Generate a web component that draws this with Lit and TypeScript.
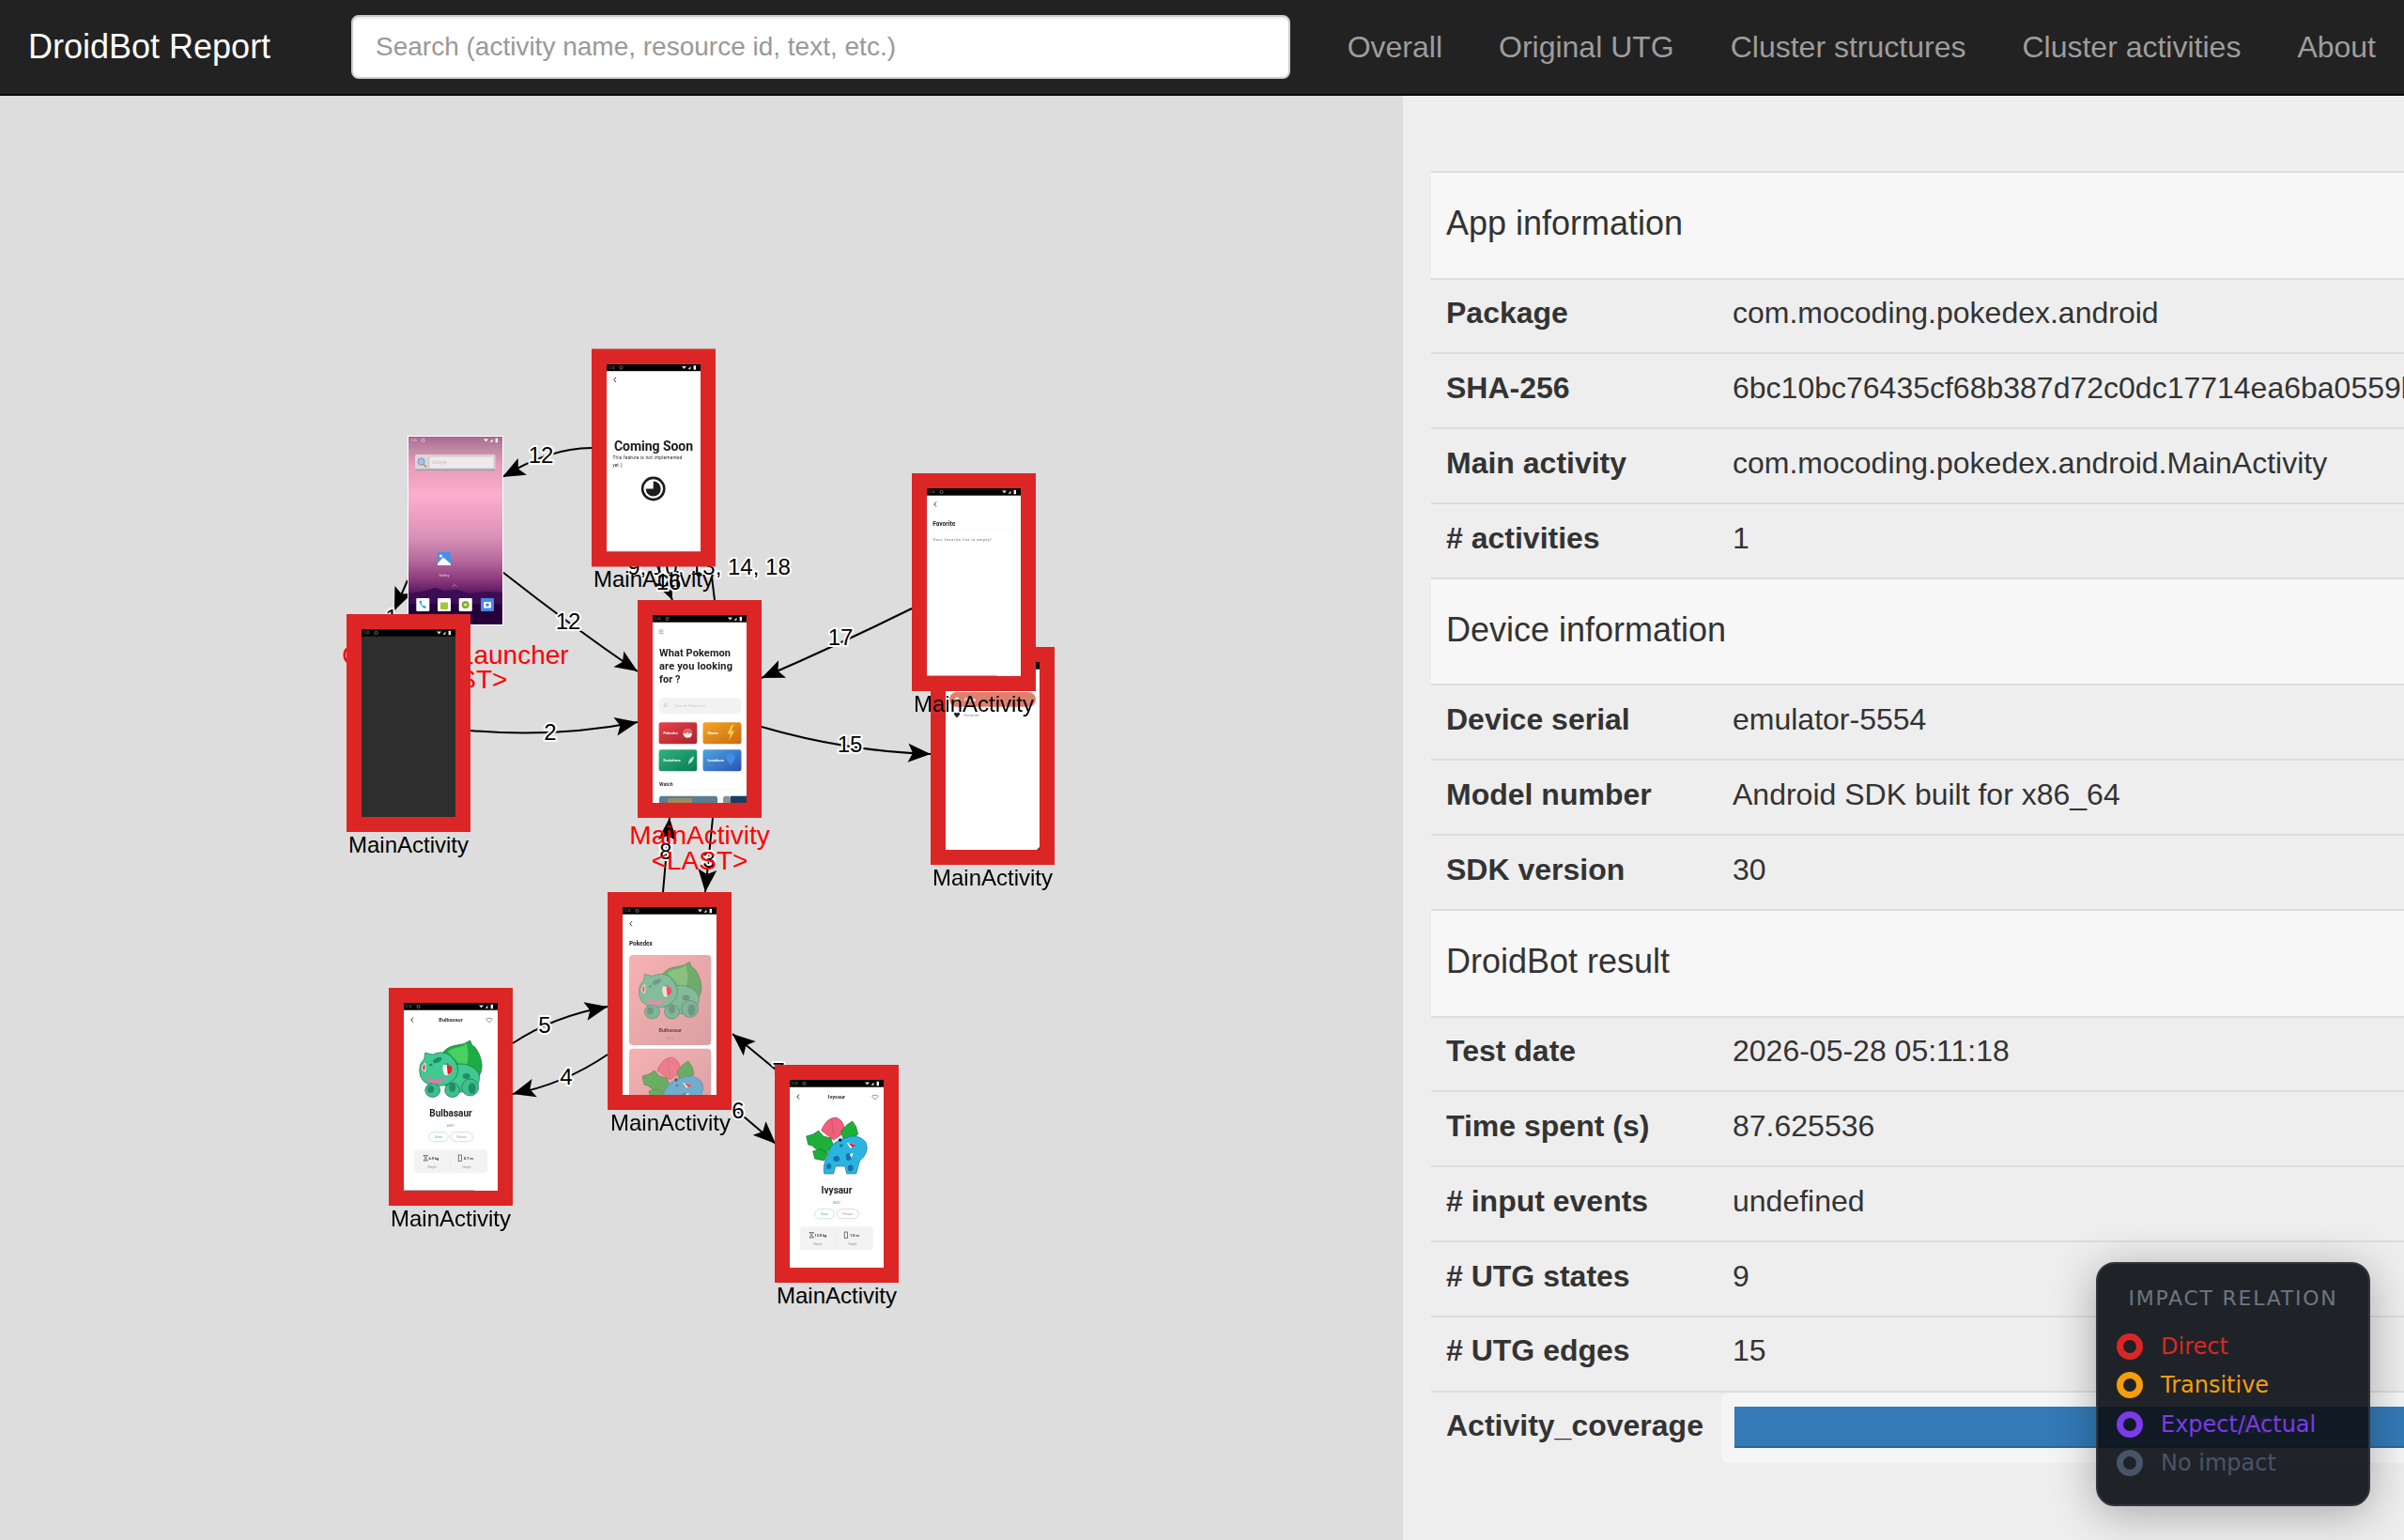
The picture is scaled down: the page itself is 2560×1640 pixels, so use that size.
import { LitElement, css, html, svg } from 'lit'
import { customElement } from 'lit/decorators.js'

const NAV_LINKS = ['Overall', 'Original UTG', 'Cluster structures', 'Cluster activities', 'About']

const SECTIONS = [
  {
    title: 'App information',
    rows: [
      ['Package', 'com.mocoding.pokedex.android'],
      ['SHA-256', '6bc10bc76435cf68b387d72c0dc17714ea6ba0559b2c41e07fd93a8e16c5d7042ab1'],
      ['Main activity', 'com.mocoding.pokedex.android.MainActivity'],
      ['# activities', '1']
    ]
  },
  {
    title: 'Device information',
    rows: [
      ['Device serial', 'emulator-5554'],
      ['Model number', 'Android SDK built for x86_64'],
      ['SDK version', '30']
    ]
  },
  {
    title: 'DroidBot result',
    rows: [
      ['Test date', '2026-05-28 05:11:18'],
      ['Time spent (s)', '87.625536'],
      ['# input events', 'undefined'],
      ['# UTG states', '9'],
      ['# UTG edges', '15']
    ]
  }
]

const LEGEND = [
  { label: 'Direct', color: '#dc2626' },
  { label: 'Transitive', color: '#f59e0b' },
  { label: 'Expect/Actual', color: '#7c3aed' },
  { label: 'No impact', color: '#475569' }
]

// path, control point (for arrow direction), arrow tip, label + label baseline
const EDGES = [
  { d: 'M630,477 Q585,477 535,508', from: [585, 482], tip: [535, 508], text: '12', lx: 576, ly: 493 },
  { d: 'M434,618 L420,650', from: [434, 618], tip: [420, 650], text: '1', lx: 417, ly: 666 },
  { d: 'M535,609 Q610,668 679,715', from: [625, 680], tip: [679, 715], text: '12', lx: 605, ly: 670 },
  { d: 'M501,778 Q590,786 679,769', from: [620, 781], tip: [679, 769], text: '2', lx: 586, ly: 788 },
  { d: 'M761,639 L757,606', text: '9, 10, 13, 14, 18', lx: 755, ly: 612 },
  { d: 'M700,603 L716,639', from: [700, 603], tip: [716, 639], text: '16', lx: 712, ly: 628 },
  { d: 'M971,648 Q890,688 811,722', from: [860, 701], tip: [811, 722], text: '17', lx: 895, ly: 687 },
  { d: 'M811,774 Q900,800 991,803', from: [930, 800], tip: [991, 803], text: '15', lx: 905, ly: 801 },
  { d: 'M706,950 L713,871', from: [709, 915], tip: [713, 871], text: '8', lx: 709, ly: 915 },
  { d: 'M759,871 L751,950', from: [755, 910], tip: [751, 950], text: '3', lx: 755, ly: 924 },
  { d: 'M546,1111 Q590,1082 647,1072', from: [600, 1082], tip: [647, 1072], text: '5', lx: 580, ly: 1100 },
  { d: 'M647,1123 Q600,1155 546,1165', from: [590, 1153], tip: [546, 1165], text: '4', lx: 603, ly: 1155 },
  { d: 'M826,1139 L780,1101', from: [800, 1118], tip: [780, 1101], text: '7', lx: 829, ly: 1149 },
  { d: 'M779,1178 L826,1218', from: [805, 1198], tip: [826, 1218], text: '6', lx: 786, ly: 1191 }
]

function arrowHead(from: number[], tip: number[]) {
  const dx = tip[0] - from[0]
  const dy = tip[1] - from[1]
  const len = Math.hypot(dx, dy)
  const ux = dx / len
  const uy = dy / len
  const at = (back: number, side: number) =>
    `${tip[0] - ux * back - uy * side},${tip[1] - uy * back + ux * side}`
  return svg`<polygon points="${at(0, 0)} ${at(24, 10)} ${at(19, 0)} ${at(24, -10)}" fill="#000"/>`
}

function statusBar() {
  return svg`
    <rect width="100" height="7.7" fill="#000"/>
    <text x="2.5" y="5.4" font-size="3.4" fill="#999">5:11</text>
    <circle cx="15.5" cy="3.9" r="1.6" fill="none" stroke="#999" stroke-width=".7"/>
    <path d="M80,2.6 h5 l-2.5,3z M86.5,5.8 l3,-3.4 v3.4z" fill="#ddd"/>
    <rect x="92.6" y="1.8" width="2.4" height="4.4" fill="#fff"/>
  `
}

function backChevron(y = 17) {
  return svg`<path d="M10,${y - 2.5} L7.8,${y} L10,${y + 2.5}" fill="none" stroke="#333" stroke-width="1"/>`
}

function bottomLine() {
  return svg`<rect y="199.3" width="75" height=".7" fill="#999"/>`
}

function comingSoonScreen() {
  return svg`
    ${statusBar()}
    ${backChevron()}
    <text x="8" y="92" font-size="14" font-weight="700" fill="#1a1a1a" textLength="84" class="thumb">Coming Soon</text>
    <text x="6.5" y="101.5" font-size="4.7" fill="#222" textLength="74" class="thumb">This feature is not implemented</text>
    <text x="6.5" y="109" font-size="4.7" fill="#222" class="thumb">yet :)</text>
    <circle cx="49.7" cy="133" r="11.6" fill="none" stroke="#1a1a1a" stroke-width="2.6"/>
    <path d="M49.7,133 V125 A8,8 0 1 1 41.7,133 Z" fill="#1a1a1a"/>
    ${bottomLine()}
  `
}

function launcherScreen() {
  const dock = [8.3, 31, 53.7, 77]
  return svg`
    <rect width="100" height="200" fill="url(#wall)"/>
    <path d="M0,167 L14,165 L28,161 L38,164 L52,163 L64,167 L82,165 L100,166 V200 H0Z" fill="#3a0f55"/>
    <rect y="178" width="100" height="22" fill="#260537"/>
    <text x="2.5" y="5.4" font-size="3.4" fill="#eedde8">5:11</text>
    <circle cx="15.5" cy="3.9" r="1.6" fill="none" stroke="#eedde8" stroke-width=".7"/>
    <path d="M80,2.6 h5 l-2.5,3z M86.5,5.8 l3,-3.4 v3.4z" fill="#fff"/>
    <rect x="92.6" y="1.8" width="2.4" height="4.4" fill="#fff"/>
    <rect x="7" y="19" width="85.5" height="17.5" rx="2" fill="#dcd4d8"/>
    <rect x="7" y="34.6" width="85.5" height="2" rx="1" fill="#a89ca2"/>
    <rect x="22" y="21" width="69" height="13" rx="1" fill="#efe9ec" stroke="#aaa" stroke-width=".4"/>
    <circle cx="13.6" cy="26.6" r="3.6" fill="#9cc6ea" stroke="#7a8a99" stroke-width=".8"/>
    <path d="M16,29.4 L19,32.6" stroke="#b58a4a" stroke-width="1.4"/>
    <text x="25" y="29.4" font-size="5" fill="#c8c4c6" class="thumb">Google</text>
    <rect x="31" y="123" width="14" height="14" rx="1" fill="#4a90e8"/>
    <circle cx="34.4" cy="127" r="1.5" fill="#fff"/>
    <path d="M31,135 L37,128.5 L45,135.5 V137 H31Z" fill="#fff"/>
    <text x="38" y="149" font-size="3.6" fill="#e8c8da" text-anchor="middle" class="thumb">Gallery</text>
    <path d="M46.5,160 L49,157.5 L51.5,160" fill="none" stroke="#c8a0c0" stroke-width=".7"/>
    ${dock.map(x => svg`<rect x="${x}" y="172" width="14" height="14" rx="1.2" fill="${x === 77 ? '#4a88e8' : '#fff'}"/>`)}
    <path d="M11.5,175 q.6,5 6,8 l1.4,-1.8 l-2.4,-1.4 l-1,.8 q-1.6,-1 -2.2,-2.8 l1,-.8 l-1,-2.4z" fill="#1e9ae0"/>
    <path d="M34,176.5 h8 v6.5 a1,1 0 0 1 -1,1 h-6 a1,1 0 0 1 -1,-1z" fill="#a4c639"/>
    <circle cx="60.7" cy="179" r="4" fill="#7fae2e"/><circle cx="60.7" cy="179" r="1.6" fill="#f0e6b0"/>
    <rect x="80" y="176" width="8" height="6.4" rx="1" fill="#fff"/><circle cx="84" cy="179.2" r="1.8" fill="#4a88e8"/>
  `
}

function darkScreen() {
  return svg`<rect width="100" height="200" fill="#2e2e2e"/>${statusBar()}`
}

function homeCard(x: number, y: number, w: number, from: string, to: string, label: string, icon: unknown) {
  const id = `card-${label}`
  return svg`
    <defs><linearGradient id="${id}" x1="0" y1="0" x2="1" y2="1"><stop offset="0" stop-color="${from}"/><stop offset="1" stop-color="${to}"/></linearGradient></defs>
    <rect x="${x}" y="${y}" width="${w}" height="23" rx="2.4" fill="url(#${id})"/>
    <text x="${x + 5}" y="${y + 12.8}" font-size="3.9" font-weight="700" fill="#fff" class="thumb">${label}</text>
    ${icon}
  `
}

function mainScreen() {
  return svg`
    ${statusBar()}
    <path d="M6.5,16 h5 M6.5,17.8 h5 M6.5,19.6 h5" stroke="#777" stroke-width=".6"/>
    <g class="thumb" font-size="11" font-weight="700" fill="#222">
      <text x="7" y="44.3" textLength="76">What Pokemon</text>
      <text x="7" y="58.3" textLength="78">are you looking</text>
      <text x="7" y="72">for ?</text>
    </g>
    <rect x="7" y="88.3" width="87" height="16.7" rx="5" fill="#f2f2f2"/>
    <circle cx="13.8" cy="96" r="1.6" fill="none" stroke="#bbb" stroke-width=".6"/>
    <text x="23" y="98" font-size="4.4" fill="#ccc" class="thumb">Search Pokemon</text>
    ${homeCard(6.6, 114.3, 40.7, '#e8404a', '#a8252c', 'Pokedex', svg`
      <circle cx="37.3" cy="126" r="4.8" fill="#f4f4f4"/><path d="M32.5,126 a4.8,4.8 0 0 1 9.6,0z" fill="#e4606a"/><circle cx="37.3" cy="126" r="1.3" fill="#fff" stroke="#555" stroke-width=".4"/>`)}
    ${homeCard(53.5, 114.3, 41, '#f5a623', '#c96a14', 'Moves', svg`
      <path d="M84,117 L79.5,126.5 H83 L81,134 L87,123.5 H83.6 L86,117Z" fill="#f6d350"/>`)}
    ${homeCard(6.6, 143.3, 40.7, '#2fb384', '#0d7a55', 'Evolutions', svg`
      <path d="M38,159 Q38,153 44,150 Q44,156 38,159Z" fill="#a8ecc6"/>`)}
    ${homeCard(53.5, 143.3, 41, '#4da7e0', '#2c50b8', 'Locations', svg`
      <path d="M83,160 Q78.5,154 78.5,151.5 a4.5,4.5 0 0 1 9,0 Q87.5,154 83,160Z" fill="#3f8fe0"/>`)}
    <text x="7" y="181.7" font-size="5.2" font-weight="700" fill="#333" class="thumb">Watch</text>
    <rect x="7" y="185.7" width="87" height=".5" fill="#f0f0f0"/>
    <rect x="7" y="192.7" width="62" height="10" rx="2.5" fill="#5a7d90"/>
    <rect x="16" y="195" width="26" height="5" fill="#a08a62"/>
    <rect x="75" y="192.7" width="8" height="10" rx="2.5" fill="#8a9298"/>
    <rect x="83" y="192.7" width="17" height="10" fill="#1e3c64"/>
  `
}

function drawerScreen() {
  return svg`
    ${statusBar()}
    <rect x="4" y="32" width="92" height="15.7" rx="7.8" fill="#e07f6e"/>
    <path d="M10,41.5 v-3 l2,-1.6 l2,1.6 v3z" fill="#fff" opacity=".85"/>
    <text x="20" y="41.5" font-size="4.5" fill="#fff" class="thumb">Home</text>
    <path d="M12,59.5 L9,56 Q8.6,53.8 10.4,53.8 Q11.6,53.8 12,54.8 Q12.4,53.8 13.6,53.8 Q15.4,53.8 15,56Z" fill="#222"/>
    <text x="20" y="58.4" font-size="4.4" fill="#888" class="thumb">Favorite</text>
    <path d="M97,200 L100,197 V200Z" fill="#335"/>
  `
}

function favoriteScreen() {
  return svg`
    ${statusBar()}
    ${backChevron()}
    <text x="6.3" y="40" font-size="6.6" font-weight="700" fill="#222" class="thumb">Favorite</text>
    <rect x="6.3" y="44" width="88" height=".5" fill="#f0f0f0"/>
    <text x="6.5" y="56" font-size="4.1" fill="#666" textLength="62" class="thumb">Your favorite list is empty!</text>
    ${bottomLine()}
  `
}

// drawn in a 67x61 box
function bulbasaur() {
  return svg`
    <g stroke="#1b5a48" stroke-width=".6">
      <path d="M25,13 C32,3 45,6 50,2 L54,0 L56,5 L59,7 C66,16 69,29 64,37 C60,42 52,38 46,34 C38,24 30,18 25,13Z" fill="#1fae42"/>
      <path d="M30,12 C38,6 46,8 50,3 C53,14 52,26 47,33 C42,24 36,17 30,12Z" fill="#49d060" stroke="none"/>
      <ellipse cx="44" cy="40" rx="20" ry="15" fill="#3fc990"/>
      <path d="M6,13 L14,15 Q24,10 33,16 Q45,28 39,39 Q30,51 14,48 Q0,45 0,32 Q0,24 5,20Z" fill="#3fc990"/>
      <ellipse cx="14" cy="53" rx="8" ry="7.4" fill="#3cc08a"/>
      <ellipse cx="35" cy="53" rx="8" ry="7.6" fill="#3cc08a"/>
      <ellipse cx="54" cy="50" rx="9" ry="9" fill="#3cc08a"/>
    </g>
    <g fill="#1f8f6a">
      <ellipse cx="19" cy="21" rx="5" ry="2.4" transform="rotate(-25 19 21)"/>
      <ellipse cx="29" cy="26" rx="2.4" ry="1.8"/>
      <ellipse cx="12" cy="26" rx="1.8" ry="1.3"/>
      <ellipse cx="50" cy="38" rx="4" ry="3"/>
      <ellipse cx="56" cy="51" rx="4" ry="6"/>
      <ellipse cx="35" cy="50" rx="3.5" ry="5"/>
      <ellipse cx="12" cy="52" rx="3.4" ry="4"/>
    </g>
    <path d="M3,31 Q2,27 6,24 Q7,28 6,33Z" fill="#f02a3a" stroke="#fff" stroke-width="1"/>
    <path d="M25,26 Q34,25 35,31 Q34,37 27,37 Q24,32 25,26Z" fill="#fff"/>
    <path d="M29,26 Q35,26 35,31 Q34,36 30,36Z" fill="#f01a2a"/>
    <path d="M7,38 Q18,45 31,38 Q24,46 15,46 Q9,44 7,38Z" fill="#f070ae"/>
  `
}

// drawn in a 67x61 box
function ivysaur() {
  return svg`
    <path d="M17,14 Q22,0 33,0 Q42,4 42,16 L30,24Z" fill="#f0607a" stroke="#a03a50" stroke-width=".6"/>
    <path d="M28,2 L30,20" stroke="#c04460" stroke-width=".6"/>
    <g fill="#1eb038" stroke="#14602a" stroke-width=".6">
      <path d="M1,20 L8,18 L14,14 L19,20 L27,22 L30,30 L22,38 L14,36 L7,30 L3,29Z"/>
      <path d="M8,36 L16,34 L24,38 L20,46 L10,44Z"/>
      <path d="M38,15 L44,8 L50,4 L54,10 L56,18 L48,24 L40,22Z"/>
    </g>
    <path d="M24,40 Q26,26 42,22 Q55,16 64,26 Q68,34 62,42 L58,46 L54,60 L44,60 L42,52 L32,52 L30,60 L20,60 Q18,50 24,40Z" fill="#2ab4e2" stroke="#186a90" stroke-width=".6"/>
    <g fill="#1a70a8">
      <ellipse cx="33" cy="44" rx="3.4" ry="3"/>
      <ellipse cx="46" cy="42" rx="3" ry="4"/>
      <ellipse cx="25" cy="52" rx="2.6" ry="3"/>
      <ellipse cx="48" cy="54" rx="3" ry="3.4"/>
      <ellipse cx="38" cy="30" rx="1.8" ry="1.4"/>
    </g>
    <path d="M44,27 L54,29 L48,33Z" fill="#fff"/>
    <path d="M46,27.5 L54,29.2 L50,32Z" fill="#e8142a"/>
    <circle cx="37" cy="24" r="1.8" fill="#123"/>
    <path d="M47,39 L49,43 L51,38" fill="#fff"/>
  `
}

function pokedexScreen() {
  return svg`
    ${statusBar()}
    ${backChevron(17.7)}
    <text x="7" y="40.7" font-size="6.4" font-weight="700" fill="#222" class="thumb">Pokedex</text>
    <rect x="7" y="44.7" width="87" height=".5" fill="#f0f0f0"/>
    <rect x="7" y="51" width="87.3" height="96" rx="4" fill="url(#pinkCard)"/>
    <g transform="translate(17.5,58.5)" opacity=".6">${bulbasaur()}</g>
    <text x="50.7" y="132.7" font-size="5.4" font-weight="700" fill="#6a4548" text-anchor="middle" class="thumb">Bulbasaur</text>
    <text x="50.7" y="140.7" font-size="3.6" fill="#c08f92" text-anchor="middle" class="thumb">#001</text>
    <rect x="7" y="150.7" width="87.3" height="60" rx="4" fill="url(#pinkCard)"/>
    <g transform="translate(20,160)" opacity=".62">${ivysaur()}</g>
  `
}

function detailScreen(name: string, id: string, weight: string, height: string, art: unknown) {
  return svg`
    ${statusBar()}
    ${backChevron(18)}
    <text x="50" y="20" font-size="5.6" font-weight="700" fill="#333" text-anchor="middle" class="thumb">${name}</text>
    <path d="M91,21 L87.8,17.6 Q87.8,15.8 91,16.4 Q94.2,15.8 94.2,17.6Z" fill="none" stroke="#555" stroke-width=".6"/>
    <g transform="translate(16.7,40)">${art}</g>
    <text x="50" y="120.7" font-size="10" font-weight="700" fill="#222" text-anchor="middle" class="thumb">${name}</text>
    <text x="50" y="132" font-size="3.6" fill="#888" text-anchor="middle" class="thumb">${id}</text>
    <rect x="26.7" y="137.7" width="20.6" height="10" rx="5" fill="none" stroke="#8fd3b0" stroke-width=".5"/>
    <text x="37" y="144" font-size="3.4" fill="#6cbf98" text-anchor="middle" class="thumb">Grass</text>
    <rect x="50" y="137.7" width="23.3" height="10" rx="5" fill="none" stroke="#c9a6e0" stroke-width=".5"/>
    <text x="61.6" y="144" font-size="3.4" fill="#b48ad0" text-anchor="middle" class="thumb">Poison</text>
    <rect x="10.7" y="156.3" width="78.3" height="25" rx="4" fill="#f3f3f3"/>
    <path d="M21,162.5 h4.5 l-4.5,5.5 h4.5z" fill="none" stroke="#444" stroke-width=".7"/>
    <text x="26.5" y="167" font-size="3.8" font-weight="700" fill="#333" class="thumb">${weight}</text>
    <text x="30" y="176" font-size="3" fill="#999" text-anchor="middle" class="thumb">Weight</text>
    <rect x="49.2" y="163" width=".4" height="12" fill="#ddd"/>
    <rect x="58.2" y="162" width="3.4" height="6.6" fill="none" stroke="#444" stroke-width=".7"/>
    <text x="64" y="167" font-size="3.8" font-weight="700" fill="#333" class="thumb">${height}</text>
    <text x="67" y="176" font-size="3" fill="#999" text-anchor="middle" class="thumb">Height</text>
  `
}

// x, y are the top-left of the 100x200 screenshot. Order is the paint order.
// labels: text, baseline, optional x nudge
const NODES = [
  {
    x: 435, y: 465, plain: true, last: true, screen: launcherScreen,
    labels: [['QuickstepLauncher', 707], ['<LAST>', 733, 4]]
  },
  { x: 646, y: 387.5, screen: comingSoonScreen, labels: [['MainActivity', 625]] },
  { x: 385, y: 670, screen: darkScreen, labels: [['MainActivity', 908]] },
  {
    x: 695, y: 655, last: true, screen: mainScreen,
    labels: [['MainActivity', 899], ['<LAST>', 926]]
  },
  { x: 1007, y: 705, screen: drawerScreen, labels: [['MainActivity', 943]] },
  { x: 987, y: 520, screen: favoriteScreen, labels: [['MainActivity', 758]] },
  { x: 663, y: 966, screen: pokedexScreen, labels: [['MainActivity', 1204, 1]] },
  {
    x: 430, y: 1068,
    screen: () => svg`${detailScreen('Bulbasaur', '#001', '6.9 kg', '0.7 m', bulbasaur())}${bottomLine()}`,
    labels: [['MainActivity', 1306]]
  },
  {
    x: 841, y: 1150,
    screen: () => detailScreen('Ivysaur', '#002', '13.0 kg', '1.0 m', ivysaur()),
    labels: [['MainActivity', 1388]]
  }
]

@customElement('utg-graph')
export class UtgGraph extends LitElement {
  renderEdge(edge: (typeof EDGES)[number]) {
    return svg`
      <path d=${edge.d} fill="none" stroke="#000" stroke-width="2"/>
      ${edge.tip && edge.from ? arrowHead(edge.from, edge.tip) : ''}
      <text class="edge-label" x=${edge.lx} y=${edge.ly}>${edge.text}</text>
    `
  }

  renderNode(node: (typeof NODES)[number]) {
    return svg`
      ${node.plain
        ? svg`<rect x=${node.x - 1} y=${node.y - 1} width="102" height="202" fill="#fff"/>`
        : svg`<rect x=${node.x - 16} y=${node.y - 16} width="132" height="232" fill="#dc2626"/>`}
      <svg x=${node.x} y=${node.y} width="100" height="200" viewBox="0 0 100 200">
        <rect width="100" height="200" fill="#fff"/>
        <g filter="url(#soft)">${node.screen()}</g>
      </svg>
      ${node.labels.map(([text, y, nudge]) => svg`
        <text class=${node.last ? 'node-label last' : 'node-label'} x=${node.x + 50 + Number(nudge ?? 0)} y=${y}>${text}</text>
      `)}
    `
  }

  render() {
    return html`
      <svg class="canvas" viewBox="0 102 1494 1538" width="1494" height="1538">
        <defs>
          <filter id="soft" x="-5%" y="-5%" width="110%" height="110%"><feGaussianBlur stdDeviation="0.25"/></filter>
          <linearGradient id="wall" x1="0" y1="0" x2="0" y2="1">
            <stop offset="0" stop-color="#a86a8e"/>
            <stop offset=".07" stop-color="#c08aa6"/>
            <stop offset=".15" stop-color="#e89ab8"/>
            <stop offset=".31" stop-color="#fbafcb"/>
            <stop offset=".42" stop-color="#ee9fc2"/>
            <stop offset=".54" stop-color="#d890b8"/>
            <stop offset=".66" stop-color="#b46a9c"/>
            <stop offset=".76" stop-color="#8c3a7c"/>
            <stop offset=".83" stop-color="#5c1a64"/>
            <stop offset="1" stop-color="#3a0f55"/>
          </linearGradient>
          <linearGradient id="pinkCard" x1="0" y1="0" x2="1" y2="1">
            <stop offset="0" stop-color="#f7b2b2"/>
            <stop offset="1" stop-color="#d9a0a4"/>
          </linearGradient>
        </defs>
        ${EDGES.map(edge => this.renderEdge(edge))}
        ${NODES.map(node => this.renderNode(node))}
      </svg>
    `
  }

  static styles = css`
    :host {
      display: block;
      background: #ddd;
      overflow: hidden;
    }

    .canvas {
      display: block;
    }

    .thumb {
      font-family: Roboto, "Liberation Sans", sans-serif;
    }

    .edge-label, .node-label {
      font-family: "Liberation Sans", Arial, sans-serif;
      font-size: 24px;
      text-anchor: middle;
      fill: #000;
    }

    .edge-label {
      stroke: #fff;
      stroke-width: 4px;
      stroke-linejoin: round;
      paint-order: stroke;
    }

    .node-label.last {
      font-size: 28px;
      fill: #f00;
    }
  `
}

@customElement('app-root')
export class AppRoot extends LitElement {
  renderSection(section: (typeof SECTIONS)[number]) {
    return html`
      <div class="section-head">${section.title}</div>
      ${section.rows.map(([name, value]) => html`
        <div class="row">
          <div class="name">${name}</div>
          <div class="value">${value}</div>
        </div>
      `)}
    `
  }

  render() {
    return html`
      <nav class="navbar">
        <a class="brand">DroidBot Report</a>
        <input class="search" type="text" placeholder="Search (activity name, resource id, text, etc.)">
        <div class="links">
          ${NAV_LINKS.map(link => html`<a>${link}</a>`)}
        </div>
      </nav>
      <main class="main">
        <utg-graph></utg-graph>
        <section class="info">
          <div class="table">
            ${SECTIONS.map(section => this.renderSection(section))}
            <div class="row coverage">
              <div class="name">Activity_coverage</div>
              <div class="progress"><div class="bar">1/1</div></div>
            </div>
          </div>
        </section>
      </main>
      <aside class="legend">
        <div class="legend-title">Impact relation</div>
        ${LEGEND.map(item => html`
          <div class="legend-item" style="color: ${item.color}">
            <span class="ring"></span>${item.label}
          </div>
        `)}
      </aside>
    `
  }

  static styles = css`
    :host {
      display: block;
      position: relative;
      height: 100vh;
      overflow: hidden;
      font-family: "Liberation Sans", Arial, sans-serif;
      color: #333;
    }

    .navbar {
      display: flex;
      align-items: center;
      height: 100px;
      background: #222;
      border-bottom: 2px solid #080808;
    }

    .brand {
      width: 374px;
      box-sizing: border-box;
      padding-left: 30px;
      font-size: 36px;
      color: #fff;
    }

    .search {
      width: 1000px;
      height: 68px;
      box-sizing: border-box;
      padding: 0 24px;
      border: 2px solid #ccc;
      border-radius: 8px;
      background: #fff;
      box-shadow: inset 0 2px 2px rgba(0, 0, 0, .075);
      font: 28px "Liberation Sans", Arial, sans-serif;
    }

    .search::placeholder {
      color: #999;
      opacity: 1;
    }

    .links {
      display: flex;
      margin-left: auto;
      white-space: nowrap;
    }

    .links a {
      padding: 0 30px;
      font-size: 32px;
      color: #9d9d9d;
    }

    .main {
      display: grid;
      grid-template-columns: 1494px 1fr;
      height: calc(100% - 102px);
    }

    .info {
      padding: 80px 0 0 30px;
      background: #eee;
      overflow: hidden;
    }

    .table {
      font-size: 32px;
      white-space: nowrap;
    }

    .section-head {
      display: flex;
      align-items: center;
      height: 113.5px;
      box-sizing: border-box;
      padding: 0 16px 3px;
      border-top: 2px solid #ddd;
      background: #f7f7f7;
      font-size: 36px;
    }

    .row {
      display: grid;
      grid-template-columns: 305px 1fr;
      align-items: center;
      height: 79.86px;
      box-sizing: border-box;
      padding-bottom: 6px;
      border-top: 2px solid #ddd;
    }

    .name {
      padding-left: 16px;
      font-weight: 700;
    }

    .value {
      padding-left: 16px;
    }

    .coverage {
      align-items: start;
      height: 80px;
      padding-bottom: 0;
    }

    .coverage .name {
      padding-top: 17px;
    }

    .progress {
      width: 1136px;
      height: 75px;
      box-sizing: border-box;
      margin-left: 4px;
      padding: 15px 14px;
      border-radius: 8px 0 0 8px;
      background: #f5f5f5;
    }

    .bar {
      height: 44px;
      background: #337ab7;
      box-shadow: inset 0 -2px 0 rgba(0, 0, 0, .15);
      font-size: 24px;
      line-height: 40px;
      text-align: center;
      color: #fff;
    }

    .legend {
      position: absolute;
      right: 36px;
      bottom: 36px;
      width: 292px;
      height: 260px;
      box-sizing: border-box;
      padding: 24px 20px;
      border: 2px solid #30363d;
      border-radius: 20px;
      background: rgba(13, 17, 23, .92);
      box-shadow: 0 8px 48px rgba(0, 0, 0, .3);
      font-family: "DejaVu Sans", sans-serif;
    }

    .legend-title {
      margin-bottom: 22px;
      font-size: 22px;
      line-height: 26px;
      letter-spacing: .08em;
      text-align: center;
      text-transform: uppercase;
      color: #6e7681;
    }

    .legend-item {
      display: flex;
      align-items: center;
      gap: 19px;
      height: 32px;
      margin-bottom: 9.33px;
      font-size: 24px;
    }

    .ring {
      width: 28px;
      height: 28px;
      box-sizing: border-box;
      border: 7px solid currentColor;
      border-radius: 50%;
    }
  `
}
